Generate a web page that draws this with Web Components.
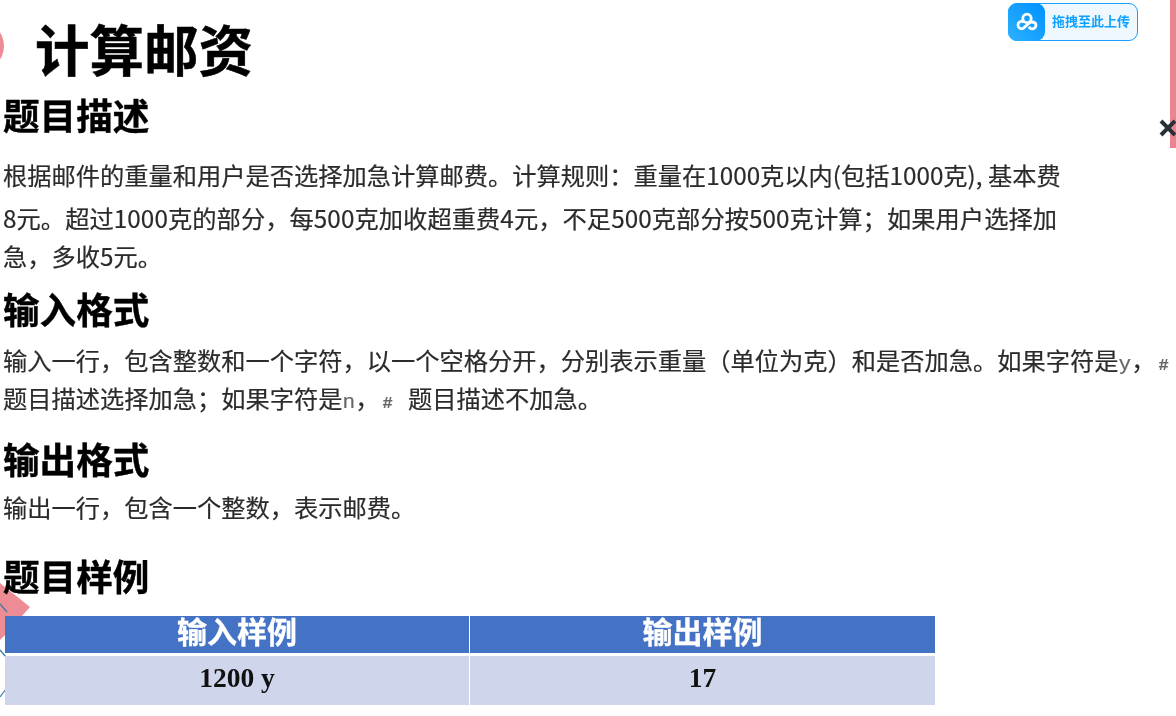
<!DOCTYPE html>
<html lang="zh-CN">
<head>
<meta charset="utf-8">
<title>计算邮资</title>
<style>
  html, body { margin: 0; height: 716px; overflow: hidden; background: #fff; }
  body { font-family: "Noto Sans CJK SC", "Noto Sans", sans-serif; color: #333; }
</style>
</head>
<body>
<template id="page-decor-tpl">
  <style>
    :host { display: block; position: absolute; inset: 0; overflow: hidden; pointer-events: none; filter: blur(.4px); }
    svg { display: block; }
  </style>
  <svg width="1176" height="716" viewBox="0 0 1176 716">
    <circle cx="-21" cy="46" r="25" fill="#ee8c96"/>
    <rect x="1170" y="0" width="6" height="148" fill="#e8858f"/>
    <path d="M1161 121l14 14M1161 135l14-14" stroke="#2b2f38" stroke-width="4" fill="none"/>
    <path d="M0 583L30 607L6 634L0 640Z" fill="#ee8c96"/>
    <path d="M0 604L7 612M0 650L6 657M0 697L6 689" stroke="#3a7ca5" stroke-width="1.2" fill="none"/>
  </svg>
</template>

<template id="upload-badge-tpl">
  <style>
    :host {
      display: flex; position: absolute; left: 1008px; top: 3px; width: 130px; height: 38px;
      box-sizing: border-box; border: 1px solid #1a9fff; border-radius: 9px; background: #f0f8ff;
      align-items: stretch; filter: blur(.3px);
    }
    .icon {
      width: 37px; margin: -1px 0 -1px -1px; flex: none; display: flex; align-items: center; justify-content: center;
      border-radius: 9px; background: linear-gradient(45deg, #2db1ff, #0091ff);
    }
    .label {
      flex: 1; display: flex; align-items: center; padding: 0 0 3px 7px;
      font: 700 13px/1 "Noto Sans CJK SC", sans-serif; color: #0ea2ff; white-space: nowrap;
    }
  </style>
  <div class="icon">
    <svg width="24" height="20" viewBox="0 0 24 20" fill="none" stroke="#fff" stroke-width="2.8">
      <circle cx="12" cy="6.4" r="4.2"/>
      <path d="M9 10.4C7.8 8.6 3 9 3 12.8C3 15.4 5 16.8 6.8 16.8C10 16.8 13 10 16.6 10C19 10 21 11 21 13.3C21 15.6 19 16.8 17.2 16.8C15.6 16.8 14.6 15.8 13.8 14.8"/>
    </svg>
  </div>
  <div class="label"><slot></slot></div>
</template>

<template id="problem-title-tpl">
  <style>
    :host {
      display: block; height: 78px; padding: 10px 0 0 35px;
      font: 700 54.5px/76px "Noto Sans CJK SC", sans-serif; color: #000;
      filter: blur(.4px); -webkit-text-stroke: .5px #000;
    }
  </style>
  <slot></slot>
</template>

<template id="problem-section-tpl">
  <style>
    :host { display: block; padding-left: 3px; filter: blur(.35px); }
    h2 { margin: 0; font: 700 36.6px/48px "Noto Sans CJK SC", sans-serif; color: #000; -webkit-text-stroke: .4px #000; }
    .body { font: 400 24.25px/38px "Noto Sans CJK SC", sans-serif; color: #2b2b2b; white-space: nowrap; -webkit-text-stroke: .2px #2b2b2b; }
  </style>
  <h2><slot name="heading"></slot></h2>
  <div class="body"><slot></slot></div>
</template>

<template id="sample-table-tpl">
  <style>
    :host {
      display: grid; grid-template-columns: 464px 465px; grid-template-rows: 37px 49px; gap: 3px 1px;
      margin-left: 5px; width: 930px; filter: blur(.35px);
    }
    .h { background: #4472c4; color: #fff; font: 700 30px/28px "Noto Sans CJK SC", sans-serif; text-align: center; -webkit-text-stroke: .3px #fff; }
    .c { background: #cfd5ea; color: #111; font: 700 27.5px/43px "Liberation Serif", serif; text-align: center; }
  </style>
  <div class="h">输入样例</div>
  <div class="h">输出样例</div>
  <div class="c">1200 y</div>
  <div class="c">17</div>
</template>

<page-decor></page-decor>
<upload-badge>拖拽至此上传</upload-badge>
<problem-title>计算邮资</problem-title>

<problem-section style="margin-top:3px">
  <span slot="heading">题目描述</span>
  <div style="margin-top:12px;line-height:48px">根据邮件的重量和用户是否选择加急计算邮费。计算规则：重量在1000克以内(包括1000克), 基本费</div>
  <div style="letter-spacing:.07px">8元。超过1000克的部分，每500克加收超重费4元，不足500克部分按500克计算；如果用户选择加</div>
  <div>急，多收5元。</div>
</problem-section>

<problem-section style="margin-top:10px">
  <span slot="heading">输入格式</span>
  <div style="margin-top:8px">输入一行，包含整数和一个字符，以一个空格分开，分别表示重量（单位为克）和是否加急。如果字符是<code-mark>y</code-mark>，<code-mark small>#</code-mark></div>
  <div>题目描述选择加急；如果字符是<code-mark>n</code-mark>，<code-mark small>#</code-mark> 题目描述不加急。</div>
</problem-section>

<problem-section style="margin-top:18px">
  <span slot="heading">输出格式</span>
  <div style="margin-top:5px">输出一行，包含一个整数，表示邮费。</div>
</problem-section>

<problem-section style="margin-top:26px">
  <span slot="heading">题目样例</span>
</problem-section>

<sample-table style="margin-top:16px"></sample-table>

<script>
  // every element just stamps its template into an open shadow root
  function stamp(name, tplId) {
    customElements.define(name, class extends HTMLElement {
      constructor() {
        super();
        this.attachShadow({ mode: 'open' });
        const tpl = document.getElementById(tplId);
        this.shadowRoot.appendChild(tpl.content.cloneNode(true));
      }
    });
  }

  stamp('page-decor', 'page-decor-tpl');
  stamp('upload-badge', 'upload-badge-tpl');
  stamp('problem-title', 'problem-title-tpl');
  stamp('problem-section', 'problem-section-tpl');
  stamp('sample-table', 'sample-table-tpl');

  // inline code bits in the statement text
  class CodeMark extends HTMLElement {
    constructor() {
      super();
      this.attachShadow({ mode: 'open' });
      const small = this.hasAttribute('small');
      const style = small
        ? 'font-size:17px;font-weight:700;padding:0 10px 0 3px'
        : 'font-size:21px';
      // no whitespace before the slot: it would render as a space in the line
      // line-height 0 keeps the mono font from stretching the line box
      this.shadowRoot.innerHTML =
        `<style>:host{display:inline;line-height:0;font-family:"Liberation Mono",monospace;color:#666;-webkit-text-stroke:.2px #666;${style}}</style><slot></slot>`;
    }
  }
  customElements.define('code-mark', CodeMark);
</script>
</body>
</html>
